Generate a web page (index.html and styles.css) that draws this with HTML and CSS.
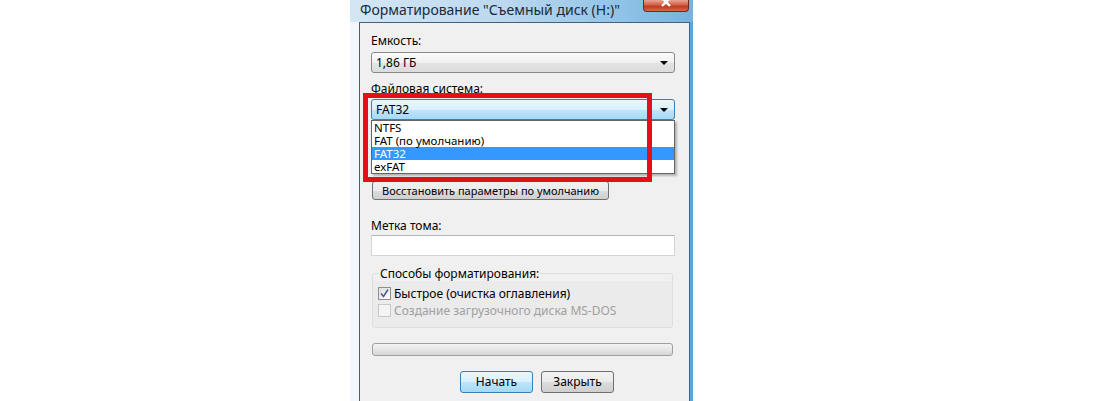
FILE: index.html
```html
<!DOCTYPE html>
<html lang="ru">
<head>
<meta charset="UTF-8">
<title>Форматирование</title>
<link rel="stylesheet" href="styles.css">
</head>
<body>

<div class="window">
    <div class="titlebar">
        <span class="title">Форматирование "Съемный диск (H:)"</span>
        <span class="close-btn">
            <svg width="12" height="8" viewBox="0 0 12 8"><path d="M2 -2 L10 6 M10 -2 L2 6" stroke="#fff" stroke-width="2.4"/></svg>
        </span>
    </div>
    <div class="frame">
        <div class="client">
            <div class="label first">Емкость:</div>
            <div class="combo">
                <span>1,86 ГБ</span>
                <span class="arrow"></span>
            </div>

            <div class="label">Файловая система:</div>
            <div class="combo-wrap">
                <div class="combo focused">
                    <span>FAT32</span>
                    <span class="arrow"></span>
                </div>
                <ul class="dropdown">
                    <li>NTFS</li>
                    <li>FAT (по умолчанию)</li>
                    <li class="selected">FAT32</li>
                    <li>exFAT</li>
                </ul>
                <div class="highlight"></div>
            </div>

            <div class="btn restore">Восстановить параметры по умолчанию</div>

            <div class="label volume">Метка тома:</div>
            <div class="textbox"></div>

            <fieldset class="group">
                <legend>Способы форматирования:</legend>
                <div class="check-row">
                    <span class="checkbox checked">
                        <svg width="11" height="11" viewBox="0 0 11 11"><path d="M2 5.5 L4.5 8.5 L9 1.5" fill="none" stroke="#4a5f9a" stroke-width="1.6"/></svg>
                    </span>
                    Быстрое (очистка оглавления)
                </div>
                <div class="check-row disabled">
                    <span class="checkbox"></span>
                    Создание загрузочного диска MS-DOS
                </div>
            </fieldset>

            <div class="progress"></div>

            <div class="buttons">
                <div class="btn default">Начать</div>
                <div class="btn">Закрыть</div>
            </div>
        </div>
    </div>
</div>

</body>
</html>
```

FILE: styles.css
```css
body {
    margin: 0;
    background: #fff;
    font-family: "Noto Sans", "Liberation Sans", sans-serif;
    font-size: 12px;
    color: #000;
}
.window {
    width: 343px;
    margin-left: 350px;
    height: 401px;
    overflow: hidden;
}
.titlebar {
    height: 22px;
    display: flex;
    justify-content: space-between;
    align-items: flex-start;
    background: linear-gradient(to right, #d4e6f4 0%, #bcd8ee 45%, #8fc2e6 80%, #76b2de 100%);
}
.title {
    padding-left: 10px;
    font-size: 14px;
    line-height: 20px;
    color: #1a2a3a;
}
.close-btn {
    width: 46px;
    height: 12px;
    margin-right: 4px;
    border: 1px solid #6b2a20;
    border-top: none;
    border-radius: 0 0 4px 4px;
    box-sizing: border-box;
    background: linear-gradient(#e8a494 0%, #d4684f 40%, #c03c22 60%, #d76a4a 100%);
    display: flex;
    justify-content: center;
    align-items: flex-start;
}
.frame {
    padding: 0 3px 0 9px;
    background: linear-gradient(to right, #f3f7fb 50%, #5ea6da 50%);
}
.client {
    height: 379px;
    border: 1px solid #41617e;
    border-bottom: none;
    background: #f0f0f0;
    padding: 0 14px 0 11px;
}
.label {
    line-height: 15px;
    margin-top: 8px;
}
.label.first {
    margin-top: 10px;
}
.label.volume {
    margin-top: 18px;
}
.combo {
    margin-top: 4px;
    height: 21px;
    box-sizing: border-box;
    border: 1px solid #8a8a8a;
    border-radius: 3px;
    background: linear-gradient(#fbfbfb 0%, #f1f1f1 50%, #e4e4e4 51%, #dcdcdc 100%);
    display: flex;
    align-items: center;
    justify-content: space-between;
    padding: 0 6px 0 4px;
}
.combo.focused {
    margin-top: 3px;
    border-color: #3c7fb1;
    background: linear-gradient(#eaf6fd 0%, #d9f0fc 50%, #bee6fd 51%, #a7d9f5 100%);
}
.arrow {
    width: 0;
    height: 0;
    border-left: 4px solid transparent;
    border-right: 4px solid transparent;
    border-top: 4px solid #000;
}
.combo-wrap {
    position: relative;
}
.dropdown {
    position: absolute;
    top: 100%;
    left: 0;
    right: 0;
    margin: 0;
    padding: 0;
    list-style: none;
    background: #fff;
    border: 1px solid #646464;
    box-shadow: 2px 2px 2px rgba(0, 0, 0, 0.25);
    font-size: 11.5px;
    line-height: 13px;
}
.dropdown li {
    padding-left: 2px;
    height: 13px;
}
.dropdown li.selected {
    background: #3399ff;
    color: #fff;
}
.highlight {
    position: absolute;
    left: -8px;
    top: -6px;
    width: 289px;
    height: 89px;
    box-sizing: border-box;
    border: 5px solid #e3101b;
}
.btn {
    height: 22px;
    box-sizing: border-box;
    width: 73px;
    border: 1px solid #707070;
    border-radius: 3px;
    background: linear-gradient(#f2f2f2 0%, #ebebeb 50%, #dddddd 51%, #cfcfcf 100%);
    text-align: center;
    line-height: 20px;
    white-space: nowrap;
}
.btn.restore {
    margin-top: 61px;
    margin-left: 1px;
    width: 237px;
    height: 19px;
    line-height: 17px;
    font-size: 11px;
}
.btn.default {
    border-color: #3c7fb1;
    background: linear-gradient(#eaf6fd 0%, #d9f0fc 50%, #bee6fd 51%, #a7d9f5 100%);
}
.textbox {
    margin-top: 2px;
    height: 21px;
    box-sizing: border-box;
    border: 1px solid #d5d5d5;
    border-top-color: #b5b5b5;
    background: #fff;
}
.group {
    margin: 10px 0 0 1px;
    width: 301px;
    box-sizing: border-box;
    border: 1px solid #dcdfe2;
    border-radius: 3px;
    padding: 4px 0 8px 6px;
    background: linear-gradient(#f0f0f0 0, #f0f0f0 7px, #ebebeb 7px);
}
.group legend {
    padding: 0 1px;
    line-height: 15px;
    background: #f0f0f0;
}
.check-row {
    display: flex;
    align-items: center;
    gap: 3px;
    height: 17px;
    margin-left: -1px;
}
.check-row.disabled {
    color: #a0a0a0;
}
.checkbox {
    width: 13px;
    height: 13px;
    box-sizing: border-box;
    border: 1px solid #8f8f8f;
    background: linear-gradient(135deg, #dcdcdc, #ffffff);
    display: flex;
    align-items: center;
    justify-content: center;
}
.check-row.disabled .checkbox {
    border-color: #c8c8c8;
    background: #f4f4f4;
}
.progress {
    margin: 15px 0 0 1px;
    width: 301px;
    height: 13px;
    box-sizing: border-box;
    border: 1px solid #a0a0a0;
    border-radius: 3px;
    background: linear-gradient(#f4f4f4 0%, #e6e6e6 50%, #d6d6d6 100%);
}
.buttons {
    display: flex;
    gap: 8px;
    margin: 15px 0 0 89px;
}
```
